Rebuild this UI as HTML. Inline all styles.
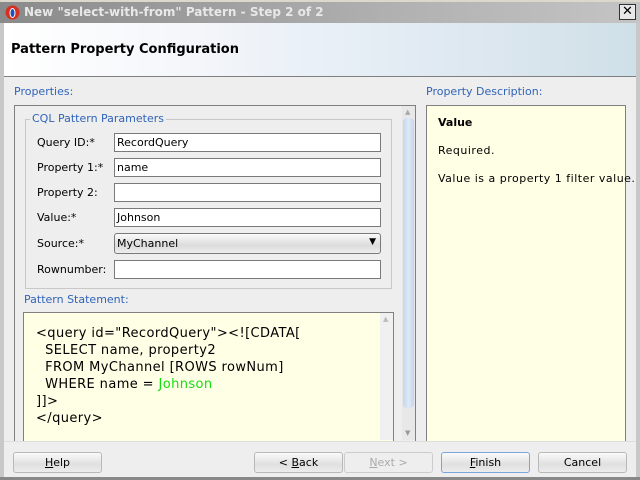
<!DOCTYPE html>
<html><head><style>
*{margin:0;padding:0;box-sizing:border-box}
body{width:640px;height:480px;overflow:hidden;background:#eeeeee;font-family:"DejaVu Sans","Liberation Sans",sans-serif;font-size:11px;color:#000;position:relative}
.a{position:absolute}
.title{left:0;top:0;width:640px;height:23px;background:linear-gradient(90deg,#8a8a8a,#b0b0b0 60%,#c4c4c4);border-top:2px solid #ddd8cc}
.title span{position:absolute;left:24px;top:3px;color:#e8e8e8;font-weight:bold;font-size:12px}
.hdr{left:4px;top:23px;width:632px;height:54px;background:linear-gradient(90deg,#fff,#f4f6fa 30%,#e6eef6 55%,#dbe6ee 80%,#cfe0e8);border-bottom:1px solid #808080}
.hdr span{position:absolute;left:7px;top:19px;font-weight:bold;font-size:13px}
.lbl{color:#3064b8;font-size:11px}
.tf{background:#fff;border:1px solid #7a7a7a;height:19px;left:114px;width:267px;font-size:11px;padding:2px 2px}
.fl{left:37px}
.btn{top:452px;height:21px;border:1px solid #b8b8b8;border-radius:3px;background:linear-gradient(#fafafa,#e0e0e0 60%,#ececec);text-align:center;font-size:11px;line-height:19px}
.sb{background:#e8e8e8}
.thumb{background:linear-gradient(90deg,#c4d6ec,#dfe9f6,#c4d6ec);border-radius:4px}
</style></head><body>
<div class="a title"><svg class="a" style="left:5px;top:3px" width="15" height="15"><circle cx="7.5" cy="7.5" r="7" fill="#d83020"/><ellipse cx="7.5" cy="8" rx="3" ry="5" fill="#fff"/><ellipse cx="7.5" cy="8" rx="2" ry="4" fill="#2050c0"/></svg><span>New "select-with-from" Pattern - Step 2 of 2</span>
<div class="a" style="left:619px;top:2px;width:17px;height:16px;border:1px solid #333;background:#e8e8e8;font-size:13px;line-height:13px;text-align:center;font-weight:bold">✕</div></div>
<div class="a" style="left:0;top:23px;width:4px;height:457px;background:#c8c8c8"></div>
<div class="a" style="left:636px;top:23px;width:4px;height:457px;background:#c8c8c8"></div>
<div class="a hdr"><span>Pattern Property Configuration</span></div>
<div class="a lbl" style="left:14px;top:85px">Properties:</div>
<div class="a lbl" style="left:426px;top:85px">Property Description:</div>
<div class="a" style="left:14px;top:105px;width:402px;height:336px;border:1px solid #808080;border-bottom:none"></div>
<div class="a sb" style="left:402px;top:106px;width:13px;height:334px"></div>
<div class="a" style="left:405px;top:108px;color:#aaa;font-size:7px">▲</div>
<div class="a thumb" style="left:403px;top:118px;width:11px;height:290px"></div>
<div class="a" style="left:405px;top:429px;color:#999;font-size:7px">▼</div>
<div class="a" style="left:25px;top:119px;width:367px;height:170px;border:1px solid #c8c8c8"></div>
<div class="a lbl" style="left:30px;top:112px;background:#eee;padding:0 2px">CQL Pattern Parameters</div>
<div class="a fl" style="top:136px">Query ID:*</div><div class="a tf" style="top:133px">RecordQuery</div>
<div class="a fl" style="top:161px">Property 1:*</div><div class="a tf" style="top:158px">name</div>
<div class="a fl" style="top:186px">Property 2:</div><div class="a tf" style="top:183px"></div>
<div class="a fl" style="top:211px">Value:*</div><div class="a tf" style="top:208px">Johnson</div>
<div class="a fl" style="top:237px">Source:*</div><div class="a tf" style="top:233px;height:21px;border-radius:3px;background:linear-gradient(#fafafa,#dcdcdc 60%,#eee);padding-top:3px">MyChannel<span style="position:absolute;right:4px;top:3px;font-size:9px">▼</span></div>
<div class="a fl" style="top:263px">Rownumber:</div><div class="a tf" style="top:260px"></div>
<div class="a lbl" style="left:24px;top:293px">Pattern Statement:</div>
<div class="a" style="left:23px;top:312px;width:371px;height:129px;background:#ffffe6;border:1px solid #808080;border-bottom:none;font-family:'DejaVu Sans',sans-serif;font-size:13px;line-height:17px;padding:12px 0 0 12px;white-space:pre;letter-spacing:0.4px">&lt;query id="RecordQuery"&gt;&lt;![CDATA[
  SELECT name, property2
  FROM MyChannel [ROWS rowNum]
  WHERE name = <span style="color:#10e010">Johnson</span>
]]&gt;
&lt;/query&gt;</div>
<div class="a sb" style="left:380px;top:313px;width:13px;height:127px;background:#f0f0f0"></div>
<div class="a" style="left:383px;top:315px;color:#bbb;font-size:7px">▲</div>
<div class="a" style="left:426px;top:105px;width:200px;height:336px;background:#ffffe6;border:1px solid #808080;border-bottom:none"></div>
<div class="a" style="left:438px;top:116px;font-weight:bold">Value</div>
<div class="a" style="left:438px;top:144px;letter-spacing:0.5px">Required.</div>
<div class="a" style="left:438px;top:172px;letter-spacing:0.5px;white-space:nowrap">Value is a property 1 filter value.</div>
<div class="a" style="left:4px;top:441px;width:632px;height:1px;background:#ddd"></div>
<div class="a btn" style="left:13px;width:89px"><u>H</u>elp</div>
<div class="a btn" style="left:254px;width:89px">&lt; <u>B</u>ack</div>
<div class="a btn" style="left:344px;width:89px;color:#aaa;border-color:#ccc;background:#eee"><u>N</u>ext &gt;</div>
<div class="a btn" style="left:441px;width:89px;border-color:#7aa6dc"><u>F</u>inish</div>
<div class="a btn" style="left:538px;width:89px">Cancel</div>
<div class="a" style="left:0;top:477px;width:640px;height:3px;background:#888"></div>
</body></html>
